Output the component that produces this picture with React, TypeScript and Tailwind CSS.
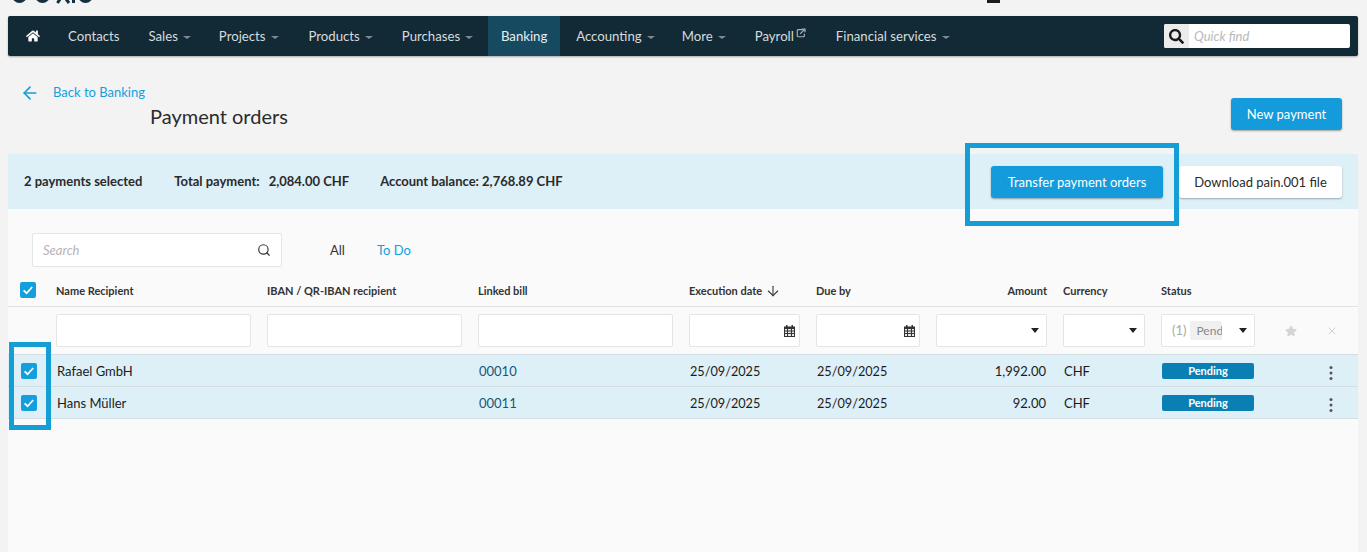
import { ArrowDown, ArrowLeft, Search, X } from 'lucide-react';
import { FaHome, FaSearch, FaStar } from 'react-icons/fa';

const GRID = 'grid grid-cols-[48px_211px_211px_211px_127px_120px_127px_98px_123px_47px_1fr]';

const navItems = [
  { label: 'Contacts', caret: false, cls: 'ml-[28px]' },
  { label: 'Sales', caret: true, cls: 'ml-[29px]' },
  { label: 'Projects', caret: true, cls: 'ml-[28px]' },
  { label: 'Products', caret: true, cls: 'ml-[30px]' },
  { label: 'Purchases', caret: true, cls: 'ml-[29px]' },
];
const navItems2 = [
  { label: 'Accounting', caret: true, cls: 'ml-[16px]' },
  { label: 'More', caret: true, cls: 'ml-[27px]' },
];

const Caret = () => (
  <span className="ml-[5px] inline-block h-0 w-0 border-x-[4px] border-t-[3px] border-x-transparent border-t-[#7f8b91] align-middle" />
);

const Check = () => (
  <div className="flex h-4 w-4 items-center justify-center rounded-[2px] bg-[#139fdd]">
    <svg viewBox="0 0 16 16" className="h-4 w-4" fill="none" stroke="#fff" strokeWidth="1.7">
      <path d="M3.6 8.4 6.6 11.2 12.2 5" />
    </svg>
  </div>
);

const Caret2 = () => (
  <svg viewBox="0 0 10 6" className="h-[5px] w-2">
    <path d="M0 0h10L5 6z" fill="#222" />
  </svg>
);

const Calendar = () => (
  <svg viewBox="0 0 11 12" className="h-3 w-[11px]">
    <path d="M2 0h1.500v1.500H7.500V0H9v1.500h2V12H0V1.500h2z" fill="#333" />
    <path d="M1 4h2v1.500H1zM4 4h3v1.500H4zM8 4h2v1.500H8zM1 6.500h2V8H1zM4 6.500h3V8H4zM8 6.500h2V8H8zM1 9h2v2H1zM4 9h3v2H4zM8 9h2v2H8z" fill="#e8e8e8" />
  </svg>
);

const Dots = () => (
  <svg viewBox="0 0 4 16" className="h-4 w-1 -translate-x-[2px] translate-y-px" fill="#555">
    <circle cx="2" cy="2.500" r="1.500" />
    <circle cx="2" cy="8" r="1.500" />
    <circle cx="2" cy="13.500" r="1.500" />
  </svg>
);

const rows = [
  { name: 'Rafael GmbH', bill: '00010', amount: '1,992.00' },
  { name: 'Hans Müller', bill: '00011', amount: '92.00' },
];

const inputCls = 'h-[33px] rounded-[2px] border border-[#e4e6e6] bg-white';

export default function App() {
  return (
    <div className="relative h-[552px] w-[1367px] overflow-hidden bg-[#f3f3f3] font-['Lato',sans-serif] text-[13px] text-[#222]">
      {/* logo cut by the top edge */}
      <svg viewBox="0 0 100 4" className="absolute left-0 top-0 h-1 w-[100px]" fill="none" stroke="#12303d" strokeWidth="3">
        <circle cx="19.500" cy="-4.500" r="6" />
        <circle cx="42.500" cy="-4.500" r="6" />
        <circle cx="85.500" cy="-4.500" r="6" />
        <path d="M60 -1 57.500 3M66 -1 69 3M73.500 0v3" />
      </svg>
      <div className="absolute left-[987px] top-0 h-[3px] w-[13px] bg-[#1c1c1c]" />

      <div className="pl-2 pr-[9px] pt-4">
        <nav className="flex h-10 items-center rounded-[2px] bg-[#122a36] pr-2 text-[13.2px] text-[#d6dbdd] shadow-[0_1px_2px_rgba(0,0,0,0.3)]">
          <FaHome className="ml-[18px] h-[14px] w-[14px] text-white" />
          {navItems.map((n) => (
            <span key={n.label} className={`${n.cls} pt-px`}>
              {n.label}
              {n.caret && <Caret />}
            </span>
          ))}
          <span className="ml-[15px] flex h-full w-[72px] items-center justify-center bg-[#164a60] pt-px text-[#e7ecee]">Banking</span>
          {navItems2.map((n) => (
            <span key={n.label} className={`${n.cls} pt-px`}>
              {n.label}
              <Caret />
            </span>
          ))}
          <span className="ml-[29px] flex items-start pt-px">
            Payroll
            <svg viewBox="0 0 12 12" className="ml-[2px] mt-[1px] h-[10px] w-[10px]" fill="none" stroke="#aab3b7" strokeWidth="1.4">
              <path d="M8 2H2.500A1 1 0 0 0 1.500 3v6.500a1 1 0 0 0 1 1H9a1 1 0 0 0 1-1V7M5 7l5-5M7 1.200h3.800V5" />
            </svg>
          </span>
          <span className="ml-[30px] pt-px">
            Financial services
            <Caret />
          </span>
          <div className="ml-auto flex h-6 w-[186px] overflow-hidden rounded-[2px] bg-white">
            <div className="flex w-[25px] items-center justify-center bg-[#ececec]">
              <FaSearch className="h-[15px] w-[15px] text-[#1a1a1a]" />
            </div>
            <span className="pl-[5px] text-[13px] italic leading-6 text-[#b9b9b9]">Quick find</span>
          </div>
        </nav>

        <div className="flex h-[98px] items-start justify-between">
          <div>
            <div className="mt-[27px] flex items-center pl-[12px] text-[#139fdd]">
              <ArrowLeft className="h-5 w-5" strokeWidth={2} />
              <span className="ml-[13px]">Back to Banking</span>
            </div>
            <h1 className="ml-[142px] mt-[1px] text-[20px] font-normal leading-6 text-[#2b2b2b]">Payment orders</h1>
          </div>
          <button className="mr-[16px] mt-[42px] h-8 w-[111px] rounded-[3px] bg-[#139bdb] pt-px text-white shadow-[0_1px_2px_rgba(0,0,0,0.35)]">
            New payment
          </button>
        </div>

        <div className="flex h-[55px] items-center bg-[#ddeff7] pl-4 pr-4">
          <span className="font-bold text-[#2a2a2a]">2 payments selected</span>
          <span className="ml-[32px] font-bold text-[#2a2a2a]">Total payment:</span>
          <span className="ml-[9px] font-bold text-[#2a2a2a]">2,084.00 CHF</span>
          <span className="ml-[31px] font-bold text-[#2a2a2a]">Account balance: 2,768.89 CHF</span>
          <button className="ml-auto h-8 w-[172px] rounded-[3px] bg-[#139bdb] pt-[2px] text-white shadow-[0_1px_2px_rgba(0,0,0,0.35)]">
            Transfer payment orders
          </button>
          <button className="ml-4 h-8 w-[163px] rounded-[3px] bg-white pt-[2px] text-[#2a2a2a] shadow-[0_1px_2px_rgba(0,0,0,0.3)]">
            Download pain.001 file
          </button>
        </div>

        <div className="h-[343px] bg-[#fafafa]">
          <div className="flex items-center pl-6 pt-6">
            <div className="flex h-[34px] w-[250px] items-center justify-between rounded-[2px] border border-[#e4e6e6] bg-white pl-[10px] pr-[10px]">
              <span className="pt-px text-[13px] italic text-[#b5b5b5]">Search</span>
              <Search className="h-[14px] w-[14px] text-[#333]" strokeWidth={2} />
            </div>
            <span className="ml-[48px] pt-px text-[#333]">All</span>
            <span className="ml-[32px] pt-px text-[#139fdd]">To Do</span>
          </div>

          <div className={`${GRID} h-[40px] items-center border-b border-[#dfe4e5] pt-[10px] text-[11px] font-bold text-[#333]`}>
            <div className="-mt-[4px] pl-3">
              <Check />
            </div>
            <span>Name Recipient</span>
            <span>IBAN / QR-IBAN recipient</span>
            <span>Linked bill</span>
            <span className="flex items-center">
              Execution date
              <ArrowDown className="ml-[3px] h-4 w-4 -translate-y-px" strokeWidth={1.6} />
            </span>
            <span>Due by</span>
            <span className="pr-4 text-right">Amount</span>
            <span>Currency</span>
            <span className="col-span-3">Status</span>
          </div>

          <div className={`${GRID} h-[47px] items-center`}>
            <div />
            <div className={`${inputCls} mr-4`} />
            <div className={`${inputCls} mr-4`} />
            <div className={`${inputCls} mr-4`} />
            <div className={`${inputCls} mr-4 flex items-center justify-end pr-[4px]`}>
              <Calendar />
            </div>
            <div className={`${inputCls} mr-4 flex items-center justify-end pr-[4px]`}>
              <Calendar />
            </div>
            <div className={`${inputCls} mr-4 flex items-center justify-end pr-[7px]`}>
              <Caret2 />
            </div>
            <div className={`${inputCls} mr-4 flex items-center justify-end pr-[7px]`}>
              <Caret2 />
            </div>
            <div className={`${inputCls} mr-[29px] flex items-center pl-[10px] pr-[7px] text-[13px] text-[#aaa]`}>
              <span>(1)</span>
              <span className="ml-1 w-[32px] overflow-hidden whitespace-nowrap rounded-[2px] bg-[#f0f0f0] pl-[6px] text-[12px] leading-[19px] text-[#888]">Pending</span>
              <span className="ml-auto">
                <Caret2 />
              </span>
            </div>
            <FaStar className="ml-px h-3 w-3 text-[#d5d5d5]" />
            <X className="h-3 w-3 -translate-x-[5px] text-[#d0d0d0]" strokeWidth={2} />
          </div>

          {rows.map((r) => (
            <div key={r.bill} className={`${GRID} h-8 items-center border-t border-[#d3dee3] bg-[#ddeff7] pt-[2px] text-[13px] text-[#1c1c1c]`}>
              <div className="-mt-[2px] pl-[13px]">
                <Check />
              </div>
              <span className="pl-px">{r.name}</span>
              <span />
              <span className="pl-px text-[#15597a]">{r.bill}</span>
              <span className="pl-px text-[12.7px]">25/09/2025</span>
              <span className="pl-px text-[12.7px]">25/09/2025</span>
              <span className="pr-[17px] text-right">{r.amount}</span>
              <span className="pl-px">CHF</span>
              <span className="ml-px mr-[30px] -mt-[2px] rounded-[2px] bg-[#0a7fb3] text-center text-[11px] font-bold leading-4 text-white">Pending</span>
              <span />
              <Dots />
            </div>
          ))}
          <div className="h-px bg-[#d3dee3]" />
        </div>
      </div>

      {/* annotation frames drawn over the screenshot */}
      <div className="absolute left-[965px] top-[143px] h-[83px] w-[214px] border-[5px] border-[#139fd6]" />
      <div className="absolute left-[9px] top-[342px] h-[88px] w-[42px] border-[5px] border-[#139fd6]" />
    </div>
  );
}
